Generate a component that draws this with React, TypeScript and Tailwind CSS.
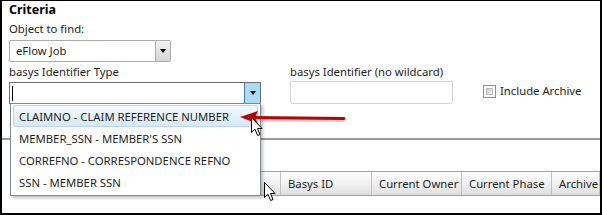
import React from "react";

const font = { fontFamily: '"Segoe UI", "Noto Sans", sans-serif' };

function Cursor({ className }: { className: string }) {
  return (
    <svg className={className} width="13" height="20" viewBox="0 0 13 20">
      <path
        d="M0.5 0.5 L0.5 15.5 L4 12.3 L6.6 18.5 L9 17.5 L6.5 11.5 L11 11.5 Z"
        fill="#ffffff"
        stroke="#000000"
        strokeWidth="1"
        strokeLinejoin="round"
      />
    </svg>
  );
}

function Arrow() {
  return (
    <svg className="absolute left-[236px] top-[107px]" width="112" height="22" viewBox="0 0 112 22">
      <defs>
        <filter id="sh" x="-10%" y="-50%" width="130%" height="250%">
          <feGaussianBlur stdDeviation="1.5" />
        </filter>
      </defs>
      <g filter="url(#sh)" opacity="0.45">
        <path d="M22 11.5 L107 12.5" stroke="#555" strokeWidth="3" />
      </g>
      <path d="M16 9.5 L106 10.5" stroke="#c00000" strokeWidth="3" strokeLinecap="round" />
      <path d="M2 9 L20 3 L17 9.5 L20 16 Z" fill="#c00000" />
    </svg>
  );
}

const items = [
  "CLAIMNO - CLAIM REFERENCE NUMBER",
  "MEMBER_SSN - MEMBER'S SSN",
  "CORREFNO - CORRESPONDENCE REFNO",
  "SSN - MEMBER SSN",
];

const cols = [
  { label: "Member", w: "w-[98px]" },
  { label: "Basys ID", w: "w-[91px]" },
  { label: "Current Owner", w: "w-[90px]" },
  { label: "Current Phase", w: "w-[90px]" },
  { label: "Archive", w: "flex-1" },
];

export default function App() {
  return (
    <div
      className="relative w-[602px] h-[215px] overflow-hidden bg-white border-t border-l-2 border-r-2 border-b-2 border-black text-[11.3px] text-[#1e1e1e]"
      style={font}
    >
      <div className="pl-[7px] pt-[1px]">
        <div className="font-bold text-[12.5px] leading-[16px] text-black">Criteria</div>
        <div className="leading-[16px] mt-[3px]">Object to find:</div>
        <div className="mt-[3px] w-[162px] h-[22px] flex border border-[#acacac] rounded-[2px] bg-white">
          <div className="flex-1 pl-[6px] leading-[20px]">eFlow Job</div>
          <div className="w-[15px] border-l border-[#acacac] bg-gradient-to-b from-[#f2f2f2] to-[#d6d6d6] flex items-center justify-center">
            <div className="w-0 h-0 border-l-[3px] border-r-[3px] border-t-[4px] border-l-transparent border-r-transparent border-t-black" />
          </div>
        </div>
        <div className="flex mt-[2px]">
          <div className="w-[252px]">
            <div className="leading-[16px]">basys Identifier Type</div>
            <div className="mt-[2px] w-[252px] h-[22px] flex border border-[#6d6d6d] bg-white">
              <div className="flex-1 pl-[2px] flex items-center">
                <div className="w-px h-[15px] bg-black" />
              </div>
              <div className="w-[16px] border-l border-[#3c7fb1] bg-[#a9dbf6] flex items-center justify-center">
                <div className="w-0 h-0 border-l-[3px] border-r-[3px] border-t-[4px] border-l-transparent border-r-transparent border-t-black" />
              </div>
            </div>
          </div>
          <div className="ml-[29px] w-[163px]">
            <div className="leading-[16px]">basys Identifier (no wildcard)</div>
            <div className="mt-[1px] w-[163px] h-[23px] border border-[#d5d5d5] rounded-[2px] bg-white" />
          </div>
          <div className="ml-[30px] mt-[19px] flex items-center gap-[4px] h-[16px]">
            <div className="w-[13px] h-[13px] border border-[#8e8f8f] bg-white p-[2px]">
              <div className="w-full h-full bg-gradient-to-br from-[#cbcbcb] to-[#f4f4f4] border border-[#bdbdbd]" />
            </div>
            <span className="leading-[16px]">Include Archive</span>
          </div>
        </div>
      </div>

      <div className="mt-[34px] h-[3px] border-t-2 border-[#9a9a9a]" />

      <div className="mt-[30px] ml-[181px] h-[25px] flex border-t border-b border-[#a0a0a0] bg-gradient-to-b from-[#ffffff] via-[#f1f1f1] to-[#dedede]">
        {cols.map((c) => (
          <div
            key={c.label}
            className={`${c.w} border-r border-[#c0c0c0] pl-[7px] leading-[23px] whitespace-nowrap overflow-hidden`}
          >
            {c.label}
          </div>
        ))}
      </div>

      <div className="absolute left-[8px] top-[102px] w-[251px] h-[93px] border border-[#828790] bg-white shadow-[2px_2px_3px_rgba(0,0,0,0.25)] px-[2px] pt-[1px]">
        {items.map((it, i) => (
          <div
            key={it}
            className={`h-[22px] pl-[5px] leading-[21px] whitespace-nowrap ${
              i === 0
                ? "border border-[#b8d6fb] rounded-[2px] bg-gradient-to-b from-[#f2f8fe] to-[#d6e9fb]"
                : "border border-transparent"
            }`}
          >
            {it}
          </div>
        ))}
      </div>

      <Arrow />
      <Cursor className="absolute left-[249px] top-[116px]" />
      <Cursor className="absolute left-[262px] top-[181px]" />
    </div>
  );
}
